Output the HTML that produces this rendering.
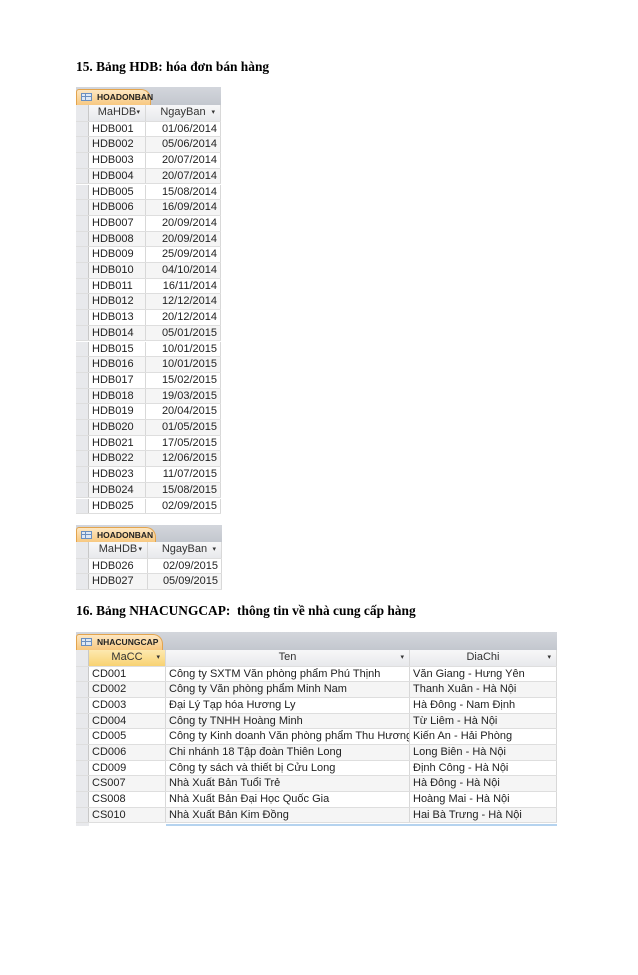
<!DOCTYPE html>
<html><head><meta charset="utf-8"><style>
body{margin:0;width:638px;height:975px;background:#fff;position:relative;font-family:"Liberation Sans","DejaVu Sans",sans-serif;overflow:hidden}
.t{position:absolute;font-family:"Liberation Serif",serif;font-weight:bold;font-size:13.4px;color:#000}
.tb{position:absolute;font-size:11px;color:#222}
.bar{position:absolute;left:0;right:0;top:0;background:linear-gradient(#d3d6dc,#c3c7ce)}
.tab{position:absolute;left:0;top:2px;background:linear-gradient(#fde7c3,#f7c67c);border:1px solid #e3a44d;border-bottom:none;border-radius:3px 10px 0 0;font-weight:bold;font-size:8.5px;color:#222;padding-left:20px;box-sizing:border-box;line-height:14px}
.tab:before{content:"";position:absolute;left:4px;top:3px;width:11px;height:8px;background:#dfe9f5;border:1px solid #6a8fc0;box-sizing:border-box;background-image:linear-gradient(90deg,transparent 3px,#6a8fc0 3px,#6a8fc0 4px,transparent 4px),linear-gradient(transparent 2px,#6a8fc0 2px,#6a8fc0 3px,transparent 3px)}
.row{position:absolute;left:0;right:0;height:15.7px;border-bottom:1px solid #dedede;box-sizing:border-box;line-height:15px}
.c{position:absolute;top:0;bottom:0;border-right:1px solid #d8d8d8;box-sizing:border-box;white-space:nowrap;overflow:hidden;padding:0 3px}
.sel{background:#e8e9ec;border-right:1px solid #c8c8c8}
.hd{background:linear-gradient(#f7f7f8,#e8e9ec);text-align:center;color:#333}
.hd span.ar{position:absolute;right:5px;font-size:7px}
.alt{background:#f5f5f5}
.r{text-align:right}
</style></head><body>

<div class="t" style="left:76px;top:59px">15. Bảng HDB: hóa đơn bán hàng</div>

<div class="tb" style="left:76px;top:87px;width:145px;height:426px">
 <div class="bar" style="height:18px"></div>
 <div class="tab" style="width:75px;height:17px">HOADONBAN</div>
 <div id="t1"></div>
</div>

<div class="tb" style="left:76px;top:525px;width:146px;height:66px">
 <div class="bar" style="height:17px"></div>
 <div class="tab" style="width:80px;height:16px">HOADONBAN</div>
 <div id="t2"></div>
</div>

<div class="t" style="left:76px;top:603px">16. Bảng NHACUNGCAP:&nbsp; thông tin về nhà cung cấp hàng</div>

<div class="tb" style="left:76px;top:632px;width:481px;height:196px">
 <div class="bar" style="height:18px"></div>
 <div class="tab" style="width:87px;height:17px">NHACUNGCAP</div>
 <div id="t3"></div>
</div>

<script>
function build(id,top,cols,head,rows,rh,hlFirst){
 var h='';var y=top;
 h+='<div class="row" style="top:'+y+'px;height:'+(rh+1)+'px">';
 h+='<div class="c sel" style="left:0;width:'+cols[0]+'px"></div>';
 var x=cols[0];
 for(var i=0;i<head.length;i++){
  var st=(hlFirst&&i==0)?'background:linear-gradient(#fde9b0,#f8d272);':'';
  h+='<div class="c hd" style="'+st+'left:'+x+'px;width:'+cols[i+1]+'px">'+head[i]+'<span class="ar">▾</span></div>';x+=cols[i+1];}
 h+='</div>';y+=rh+1;
 for(var r=0;r<rows.length;r++){
  h+='<div class="row'+(r%2?' alt':'')+'" style="top:'+y+'px;height:'+rh+'px">';
  h+='<div class="c sel" style="left:0;width:'+cols[0]+'px"></div>';x=cols[0];
  for(var i=0;i<rows[r].length;i++){
   var cl=(id!='t3'&&i==1)?' r':'';
   h+='<div class="c'+cl+'" style="left:'+x+'px;width:'+cols[i+1]+'px">'+rows[r][i]+'</div>';x+=cols[i+1];}
  h+='</div>';y+=rh;}
 document.getElementById(id).innerHTML=h;return y;
}
var d=["01/06/2014","05/06/2014","20/07/2014","20/07/2014","15/08/2014","16/09/2014","20/09/2014","20/09/2014","25/09/2014","04/10/2014","16/11/2014","12/12/2014","20/12/2014","05/01/2015","10/01/2015","10/01/2015","15/02/2015","19/03/2015","20/04/2015","01/05/2015","17/05/2015","12/06/2015","11/07/2015","15/08/2015","02/09/2015"];
var r1=[];for(var i=0;i<25;i++){r1.push(["HDB0"+(i<9?"0":"")+(i+1),d[i]]);}
build('t1',18,[13,57,75],["MaHDB","NgayBan"],r1,15.7);
build('t2',17,[13,59,74],["MaHDB","NgayBan"],[["HDB026","02/09/2015"],["HDB027","05/09/2015"]],15.7);
var r3=[["CD001","Công ty SXTM Văn phòng phẩm Phú Thịnh","Văn Giang - Hưng Yên"],
["CD002","Công ty Văn phòng phẩm Minh Nam","Thanh Xuân - Hà Nội"],
["CD003","Đại Lý Tạp hóa Hương Ly","Hà Đông - Nam Định"],
["CD004","Công ty TNHH Hoàng Minh","Từ Liêm - Hà Nội"],
["CD005","Công ty Kinh doanh Văn phòng phẩm Thu Hương","Kiến An - Hải Phòng"],
["CD006","Chi nhánh 18 Tập đoàn Thiên Long","Long Biên - Hà Nội"],
["CD009","Công ty sách và thiết bị Cửu Long","Định Công - Hà Nội"],
["CS007","Nhà Xuất Bản Tuổi Trẻ","Hà Đông - Hà Nội"],
["CS008","Nhà Xuất Bản Đại Học Quốc Gia","Hoàng Mai - Hà Nội"],
["CS010","Nhà Xuất Bản Kim Đồng","Hai Bà Trưng - Hà Nội"]];
var y=build('t3',18,[13,77,244,147],["MaCC","Ten","DiaChi"],r3,15.67,true);
document.getElementById('t3').innerHTML+='<div style="position:absolute;left:0;width:13px;top:'+y+'px;height:3px;background:#e8e9ec"></div><div style="position:absolute;left:90px;right:0;top:'+(y+1)+'px;height:2px;background:#b5d3ef"></div>';
</script>
</body></html>
